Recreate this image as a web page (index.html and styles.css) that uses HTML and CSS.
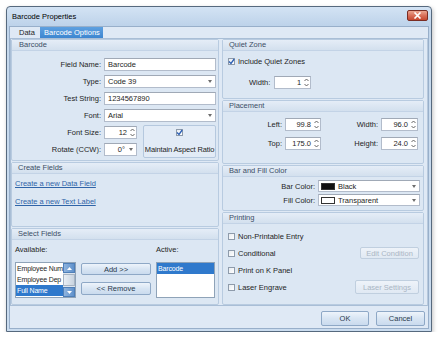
FILE: index.html
```html
<!DOCTYPE html>
<html lang="en">
<head>
  <meta charset="UTF-8" />
  <title>Barcode Properties</title>
  <link rel="stylesheet" href="styles.css">
</head>
<body>

<div class="window">
  <div class="titlebar">
    <span class="title">Barcode Properties</span>
    <span class="close">
      <svg width="9" height="7" viewBox="0 0 9 7"><path d="M1.5 0.5 L7.5 6.5 M7.5 0.5 L1.5 6.5" stroke="#fff" stroke-width="1.6"/></svg>
    </span>
  </div>

  <div class="client">
    <div class="tabs">
      <span class="tab">Data</span>
      <span class="tab active">Barcode Options</span>
    </div>

    <div class="page">
      <!-- left column -->
      <div class="col">
        <div class="panel p-barcode">
          <div class="panel-head">Barcode</div>
          <div class="panel-body form">
            <label>Field Name:</label><div class="input">Barcode</div>
            <label>Type:</label><div class="input select">Code 39<span class="drop"></span></div>
            <label>Test String:</label><div class="input">1234567890</div>
            <label>Font:</label><div class="input select">Arial<span class="drop"></span></div>
            <div class="sub">
              <label>Font Size:</label>
              <div class="input spin">12<span class="arrows"><svg width="5" height="9" viewBox="0 0 5 9"><path d="M0.5 3 L2.5 1 L4.5 3 M0.5 6 L2.5 8 L4.5 6" fill="none" stroke="#555" stroke-width="0.9"/></svg></span></div>
              <div class="aspect">
                <span class="check checked"><svg width="7" height="7" viewBox="0 0 7 7"><path d="M1 3.5 L3 5.5 L6.2 1" fill="none" stroke="#2b5fb4" stroke-width="1.3"/></svg></span>
                <span class="aspect-text">Maintain Aspect Ratio</span>
              </div>
              <label>Rotate (CCW):</label>
              <div class="input select right">0°<span class="drop"></span></div>
            </div>
          </div>
        </div>

        <div class="panel p-create">
          <div class="panel-head">Create Fields</div>
          <div class="panel-body links">
            <a href="#">Create a new Data Field</a>
            <a href="#">Create a new Text Label</a>
          </div>
        </div>

        <div class="panel p-select">
          <div class="panel-head">Select Fields</div>
          <div class="panel-body pick">
            <span class="cap">Available:</span>
            <span></span>
            <span class="cap">Active:</span>
            <div class="list">
              <div class="items">
                <div class="item">Employee Num</div>
                <div class="item">Employee Dep</div>
                <div class="item sel">Full Name</div>
              </div>
              <div class="scroll">
                <span class="sbtn"><svg width="5" height="3" viewBox="0 0 5 3"><path d="M0 3 L2.5 0 L5 3Z" fill="#fff"/></svg></span>
                <span class="thumb"></span>
                <span class="sbtn"><svg width="5" height="3" viewBox="0 0 5 3"><path d="M0 0 L2.5 3 L5 0Z" fill="#fff"/></svg></span>
              </div>
            </div>
            <div class="movers">
              <span class="btn">Add &gt;&gt;</span>
              <span class="btn">&lt;&lt; Remove</span>
            </div>
            <div class="list">
              <div class="items">
                <div class="item sel">Barcode</div>
              </div>
            </div>
          </div>
        </div>
      </div>

      <!-- right column -->
      <div class="col">
        <div class="panel p-quiet">
          <div class="panel-head">Quiet Zone</div>
          <div class="panel-body quiet">
            <div class="checkrow">
              <span class="check checked"><svg width="7" height="7" viewBox="0 0 7 7"><path d="M1 3.5 L3 5.5 L6.2 1" fill="none" stroke="#2b5fb4" stroke-width="1.3"/></svg></span>
              <span>Include Quiet Zones</span>
            </div>
            <div class="qwidth">
              <label>Width:</label>
              <div class="input spin">1<span class="arrows"><svg width="5" height="9" viewBox="0 0 5 9"><path d="M0.5 3 L2.5 1 L4.5 3 M0.5 6 L2.5 8 L4.5 6" fill="none" stroke="#555" stroke-width="0.9"/></svg></span></div>
            </div>
          </div>
        </div>

        <div class="panel p-place">
          <div class="panel-head">Placement</div>
          <div class="panel-body place">
            <label>Left:</label>
            <div class="input spin">99.8<span class="arrows"><svg width="5" height="9" viewBox="0 0 5 9"><path d="M0.5 3 L2.5 1 L4.5 3 M0.5 6 L2.5 8 L4.5 6" fill="none" stroke="#555" stroke-width="0.9"/></svg></span></div>
            <label>Width:</label>
            <div class="input spin">96.0<span class="arrows"><svg width="5" height="9" viewBox="0 0 5 9"><path d="M0.5 3 L2.5 1 L4.5 3 M0.5 6 L2.5 8 L4.5 6" fill="none" stroke="#555" stroke-width="0.9"/></svg></span></div>
            <label>Top:</label>
            <div class="input spin">175.0<span class="arrows"><svg width="5" height="9" viewBox="0 0 5 9"><path d="M0.5 3 L2.5 1 L4.5 3 M0.5 6 L2.5 8 L4.5 6" fill="none" stroke="#555" stroke-width="0.9"/></svg></span></div>
            <label>Height:</label>
            <div class="input spin">24.0<span class="arrows"><svg width="5" height="9" viewBox="0 0 5 9"><path d="M0.5 3 L2.5 1 L4.5 3 M0.5 6 L2.5 8 L4.5 6" fill="none" stroke="#555" stroke-width="0.9"/></svg></span></div>
          </div>
        </div>

        <div class="panel p-color">
          <div class="panel-head">Bar and Fill Color</div>
          <div class="panel-body colors">
            <label>Bar Color:</label>
            <div class="input select"><span class="swatch black"></span>Black<span class="drop"></span></div>
            <label>Fill Color:</label>
            <div class="input select"><span class="swatch"></span>Transparent<span class="drop"></span></div>
          </div>
        </div>

        <div class="panel p-print">
          <div class="panel-head">Printing</div>
          <div class="panel-body printing">
            <div class="checkrow"><span class="check"></span><span>Non-Printable Entry</span></div>
            <div class="checkrow"><span class="check"></span><span>Conditional</span><span class="btn off w-edit">Edit Condition</span></div>
            <div class="checkrow"><span class="check"></span><span>Print on K Panel</span></div>
            <div class="checkrow"><span class="check"></span><span>Laser Engrave</span><span class="btn off w-laser">Laser Settings</span></div>
          </div>
        </div>
      </div>
    </div>

    <div class="footer">
      <span class="btn big">OK</span>
      <span class="btn big">Cancel</span>
    </div>
  </div>
</div>

</body>
</html>
```

FILE: styles.css
```css
* { box-sizing: border-box; }
body { margin: 0; background: #fff; font-family: "Liberation Sans", Arial, sans-serif; font-size: 7.5px; color: #1e1e1e; }

.window {
  margin: 6px 0 0 6px; width: 426px; height: 326px;
  border: 1px solid #56697e; border-radius: 4px 4px 0 0;
  background: linear-gradient(#d3e3f4, #bed3ea 18px, #c6d9ed 40px, #cadcef);
  padding: 0 2px 2px 2px;
  display: flex; flex-direction: column;
  box-shadow: 1px 2px 4px rgba(0,0,0,0.25);
}
.titlebar { height: 19px; display: flex; align-items: center; justify-content: space-between; padding-left: 3px; }
.title { color: #000; font-size: 7.5px; }
.close {
  width: 21px; height: 11px; margin: -2px 1px 0 0;
  border: 1px solid #7a2d24; border-radius: 2px;
  background: linear-gradient(#eba590, #d9705a 50%, #c5472f);
  display: flex; align-items: center; justify-content: center;
}

.client { flex: 1; background: #dfe9f5; border: 1px solid #98afca; display: flex; flex-direction: column; }
.tabs { height: 11px; display: flex; padding-left: 7px; }
.tab { height: 11px; line-height: 11px; padding: 0 4px 0 2px; width: 23px; color: #1e1e1e; white-space: nowrap; }
.tab.active { width: 63px; background: linear-gradient(#5ea0e0, #3d86d0); color: #fff; padding: 0 0 0 4px; }

.page {
  height: 268px; border: 1px solid #a9bed6; border-right-color: #b7c9dd;
  display: grid; grid-template-columns: 208px 202px; column-gap: 3px; padding-right: 2px;
}
.col { display: flex; flex-direction: column; gap: 1px; }

.panel { border: 1px solid #b8cbe0; border-radius: 2px; background: #dce7f3; }
.panel-head {
  height: 11px; line-height: 10px; padding-left: 6px;
  background: linear-gradient(#e5edf7, #d3e0ee);
  border-bottom: 1px solid #c3d3e6; color: #3c4e66;
}
.p-barcode { height: 122px; }
.p-barcode .panel-head { padding-left: 7px; }
.p-create { height: 65px; }
.p-select { height: 77px; }
.p-quiet { height: 60px; }
.p-place { height: 64px; }
.p-color { height: 46px; }
.p-print { height: 93px; }

label { text-align: right; color: #1e1e1e; white-space: nowrap; }
.input {
  height: 13px; line-height: 11px; background: #fff;
  border: 1px solid #b2bccb; border-top-color: #a0a9b6;
  padding: 0 3px; display: flex; align-items: center; white-space: nowrap;
}
.select .drop { margin-left: auto; width: 0; height: 0; border-left: 2.5px solid transparent; border-right: 2.5px solid transparent; border-top: 3px solid #6d6d6d; }
.select.right { justify-content: flex-end; }
.select.right .drop { margin-left: 4px; }
.spin { justify-content: flex-end; padding-right: 1px; }
.spin .arrows { margin-left: 3px; display: flex; }

.form { display: grid; grid-template-columns: 89px 112px; column-gap: 3px; row-gap: 4px; padding-top: 7px; align-items: center; }
.form label { line-height: 13px; }
.sub { grid-column: 1 / 3; display: grid; grid-template-columns: 89px 33px 74px; column-gap: 3px; row-gap: 4px; grid-template-rows: 13px 13px; }
.sub label { line-height: 13px; }
.aspect {
  grid-column: 3; grid-row: 1 / 3; margin: -1px -2px -2px 3px;
  border: 1px solid #b5c8de; border-radius: 2px; background: #e2ebf6;
  display: flex; flex-direction: column; align-items: center; justify-content: space-between; padding: 3px 0 3px;
}
.aspect-text { white-space: nowrap; letter-spacing: -0.15px; }

.check {
  width: 7px; height: 7px; border: 1px solid #8e9bab; flex: none;
  background: linear-gradient(135deg, #e8ecf0, #fff);
  display: inline-flex; align-items: center; justify-content: center;
}
.check svg { margin: -1px; }

.links { display: flex; flex-direction: column; gap: 8px; padding: 5px 0 0 3px; }
.links a { color: #2f64a8; line-height: 10px; }

.pick { display: grid; grid-template-columns: 61px 68px 61px; column-gap: 5px; grid-template-rows: 10px 36px; row-gap: 7px; padding: 5px 0 0 3px; }
.pick > :nth-child(3) { margin-left: 2px; }
.pick .movers { margin-right: -2px; }
.pick > .list:last-child { margin-left: 2px; }
.cap { line-height: 10px; }
.list { background: #fff; border: 1px solid #8fa3b8; display: flex; }
.items { flex: 1; overflow: hidden; }
.item { height: 11px; line-height: 11px; padding-left: 1px; white-space: nowrap; font-size: 7px; letter-spacing: -0.15px; }
.item.sel { background: #2f79cc; color: #fff; }
.scroll { width: 12px; display: flex; flex-direction: column; background: #dfe6ee; flex: none; }
.sbtn { height: 10px; background: linear-gradient(90deg, #8fb4de, #5f91cc); border: 1px solid #4f7fb8; display: flex; align-items: center; justify-content: center; }
.thumb { flex: 1; margin: 1px 0; background: linear-gradient(90deg, #e9eef4, #c9d4e0); border: 1px solid #a7b4c3; }
.movers { display: flex; flex-direction: column; gap: 7px; padding-top: 1px; }
.btn {
  display: flex; align-items: center; justify-content: center; white-space: nowrap;
  height: 12px; border: 1px solid #8ea8c6; border-radius: 2px;
  background: linear-gradient(#eef4fb, #d8e5f3 50%, #cadbee); color: #2a3a4e;
}
.movers .btn:last-child { height: 13px; }

.quiet { padding: 5px 0 0 5px; }
.checkrow { display: flex; align-items: center; gap: 3px; height: 10px; white-space: nowrap; }
.qwidth { display: flex; align-items: center; gap: 4px; margin: 10px 0 0 21px; }
.qwidth .spin { width: 37px; }

.place { display: grid; grid-template-columns: 59px 36px 54px 37px; column-gap: 3px; row-gap: 6px; padding-top: 6px; align-items: center; }

.colors { display: grid; grid-template-columns: 92px 102px; column-gap: 3px; row-gap: 2px; padding-top: 3px; align-items: center; }
.colors .input { height: 12px; padding-left: 2px; }
.swatch { width: 14px; height: 7px; border: 1px solid #333; margin-right: 3px; background: #fff; }
.swatch.black { background: #111; }

.printing { display: flex; flex-direction: column; gap: 3px; padding: 5px 4px 0 5px; }
.printing .checkrow { height: 14px; }
.btn.off { margin-left: auto; color: #aab6c4; border-color: #c0cfdf; background: linear-gradient(#eef3f9, #e0e9f3); }
.w-edit { width: 59px; }
.w-laser { width: 64px; height: 14px; }

.footer { flex: 1; display: flex; justify-content: flex-end; align-items: flex-start; gap: 7px; padding: 5px 3px 0 0; }
.btn.big { height: 15px; width: 48px; }
.btn.big:last-child { width: 49px; }
```
